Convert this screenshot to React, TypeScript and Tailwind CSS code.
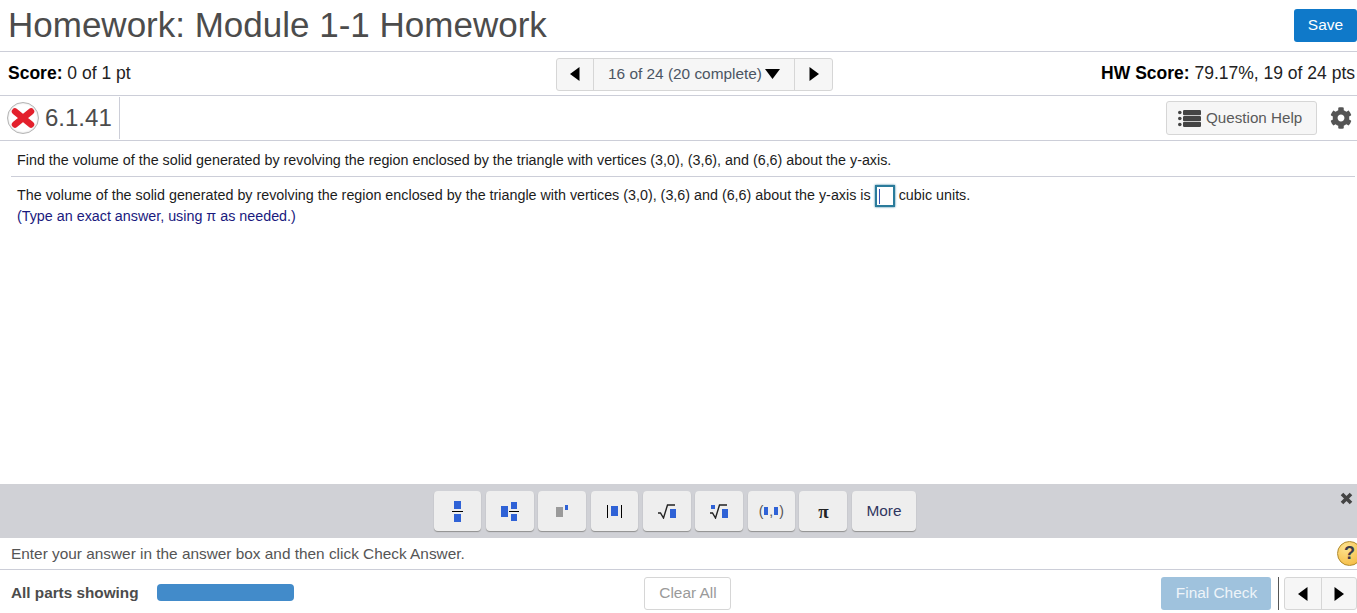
import { FaCog } from "react-icons/fa";
import type { ReactNode } from "react";

const Box = ({ className }: { className: string }) => <span className={`block bg-[#2f62d6] ${className}`} />;

const ArrowLeft = () => (
  <svg width="10" height="14" viewBox="0 0 10 14" className="fill-black">
    <path d="M9.5 0v14L0 7z" />
  </svg>
);

const ArrowRight = () => (
  <svg width="10" height="14" viewBox="0 0 10 14" className="fill-black">
    <path d="M.5 0v14L10 7z" />
  </svg>
);

const ToolButton = ({ width, children }: { width: string; children: ReactNode }) => (
  <button className={`flex h-[40px] shrink-0 items-center justify-center rounded-[4px] bg-[#eeeeee] shadow-[0_1px_1px_#8f8f8f] ${width}`}>
    {children}
  </button>
);

const RootIcon = ({ indexed }: { indexed?: boolean }) => (
  <svg width="18" height="15" viewBox="0 0 18 15">
    <path d="M0 9h2.5l3 5L9.5 1H17" fill="none" stroke="#222" strokeWidth="1.4" />
    <rect x="12" y="5" width="6" height="9" fill="#2f62d6" />
    {indexed && <rect x="1" y="1" width="4" height="4" fill="#2f62d6" />}
  </svg>
);

export default function App() {
  return (
    <div className="flex h-[613px] w-[1357px] flex-col overflow-hidden bg-white font-['Liberation_Sans',Arial,sans-serif] text-[#4a4a4a]">
      <header className="flex h-[52px] shrink-0 items-center justify-between border-b border-[#ccced8] pl-2">
        <h1 className="mb-[2px] text-[35px] leading-none text-[#4c4c4c]">Homework: Module 1-1 Homework</h1>
        <button className="mb-[1px] flex h-[33px] w-[63px] items-center justify-center rounded-[3px] bg-[#0f79c9] text-[15.5px] text-white">Save</button>
      </header>

      <div className="grid h-[44px] shrink-0 grid-cols-[548px_277px_1fr] items-center border-b border-[#ccced8] pl-2 pr-[2px] text-[17.5px] text-[#222]">
        <p><b className="text-black">Score:</b> 0 of 1 pt</p>
        <div className="mt-[1px] flex h-[33px] rounded-[3px] border border-[#d6d6d6] bg-[#f6f6f6]">
          <span className="flex w-[37px] items-center justify-center border-r border-[#d6d6d6]"><ArrowLeft /></span>
          <span className="flex flex-1 items-center justify-center gap-[3px] whitespace-nowrap text-[15.4px] text-[#4b5563]">
            16 of 24 (20 complete)
            <svg width="15" height="10" viewBox="0 0 15 10" className="fill-black"><path d="M0 0h15L7.5 10z" /></svg>
          </span>
          <span className="flex w-[38px] items-center justify-center border-l border-[#d6d6d6]"><ArrowRight /></span>
        </div>
        <p className="justify-self-end whitespace-nowrap"><b className="text-black">HW Score:</b> 79.17%, 19 of 24 pts</p>
      </div>

      <div className="flex h-[45px] shrink-0 items-center justify-between border-b border-[#ccced8]">
        <div className="flex h-[42px] items-center border-r border-[#ccced8] pl-[7px] pr-[7px]">
          <span className="flex h-[32px] w-[32px] items-center justify-center rounded-full border-[1.5px] border-[#b4b4b4] bg-white shadow-[inset_0_0_2px_#ccc]">
            <svg width="24" height="20" viewBox="0 0 24 20" fill="none" stroke="#e3202c" strokeWidth="6.5" strokeLinecap="round">
              <path d="M4 3.5l16 13M20 3.5l-16 13" />
            </svg>
          </span>
          <span className="ml-[6px] text-[24px] text-[#4c4c4c]">6.1.41</span>
        </div>
        <div className="flex items-center pr-[5px]">
          <button className="flex h-[34px] w-[151px] items-center gap-[5px] rounded-[3px] border border-[#d6d6d6] bg-[#f6f6f6] pl-[11px] text-[15.2px] text-[#5a5a5a]">
            <svg width="23" height="17" viewBox="0 0 23 17" className="fill-[#444]">
              <circle cx="1.8" cy="2.5" r="1.8" />
              <circle cx="1.8" cy="8.5" r="1.8" />
              <circle cx="1.8" cy="14.5" r="1.8" />
              <rect x="5" y="0" width="18" height="5.2" rx="1.2" />
              <rect x="5" y="5.9" width="18" height="5.2" rx="1.2" />
              <rect x="5" y="11.8" width="18" height="5.2" rx="1.2" />
            </svg>
            Question Help
          </button>
          <FaCog size={22} className="ml-[13px] text-[#555]" />
        </div>
      </div>

      <main className="min-h-0 flex-1 pl-[11px] pr-[2px] text-[14.32px] text-[#1c1c1c]">
        <p className="flex h-[35px] items-center pl-[6px] pt-[4px]">
          Find the volume of the solid generated by revolving the region enclosed by the triangle with vertices (3,0), (3,6), and (6,6) about the y-axis.
        </p>
        <div className="border-t border-[#ccced8] pl-[6px] pt-[9px]">
          <p className="flex h-[20px] items-center">
            The volume of the solid generated by revolving the region enclosed by the triangle with vertices (3,0), (3,6) and (6,6) about the y-axis is
            <span className="mx-[4px] flex h-[22px] w-[20px] items-center border-2 border-[#2a7b9b] bg-white pl-[2px] shadow-[0_0_2px_#2a7b9b]">
              <span className="h-[15px] w-px bg-[#3552b5]" />
            </span>
            cubic units.
          </p>
          <p className="text-[#1a1a7e]">(Type an exact answer, using π as needed.)</p>
        </div>
      </main>

      <div className="relative flex h-[54px] shrink-0 items-center justify-center gap-[4.625px] bg-[#d0d1d6] pr-[7px]">
        <ToolButton width="w-[47px]">
          <span className="flex flex-col items-center gap-[2px]">
            <Box className="h-[8px] w-[7px]" />
            <span className="h-px w-[11px] bg-black" />
            <Box className="h-[8px] w-[7px]" />
          </span>
        </ToolButton>
        <ToolButton width="w-[48px]">
          <span className="flex items-center gap-[1px]">
            <Box className="h-[11px] w-[7px]" />
            <span className="flex flex-col items-center gap-[2px]">
              <Box className="h-[7px] w-[6px]" />
              <span className="h-px w-[10px] bg-black" />
              <Box className="h-[7px] w-[6px]" />
            </span>
          </span>
        </ToolButton>
        <ToolButton width="w-[48px]">
          <span className="flex items-start gap-[2px]">
            <span className="mt-[2px] h-[10px] w-[7px] bg-[#9a9a9a]" />
            <Box className="h-[5px] w-[3px]" />
          </span>
        </ToolButton>
        <ToolButton width="w-[47px]">
          <span className="flex items-center gap-[3px]">
            <span className="h-[13px] w-px bg-black" />
            <Box className="h-[10px] w-[7px]" />
            <span className="h-[13px] w-px bg-black" />
          </span>
        </ToolButton>
        <ToolButton width="w-[48px]"><RootIcon /></ToolButton>
        <ToolButton width="w-[48px]"><RootIcon indexed /></ToolButton>
        <ToolButton width="w-[47px]">
          <span className="flex items-center gap-[1px] text-[14px] text-[#555]">
            (<Box className="h-[8px] w-[4px]" />,<Box className="h-[8px] w-[4px]" />)
          </span>
        </ToolButton>
        <ToolButton width="w-[48px]">
          <span className="font-['Liberation_Serif',serif] text-[19px] font-bold leading-none text-[#222]">π</span>
        </ToolButton>
        <ToolButton width="w-[64px]"><span className="text-[15.4px] text-[#30365f]">More</span></ToolButton>
        <svg width="13" height="13" viewBox="0 0 13 13" fill="none" stroke="#444" strokeWidth="3.6" className="absolute right-[4px] top-[8px]">
          <path d="M2 2l9 9M11 2l-9 9" />
        </svg>
      </div>

      <div className="relative flex h-[32px] shrink-0 items-center border-b border-[#ccced8] pl-[11px] text-[15.38px] text-[#555]">
        Enter your answer in the answer box and then click Check Answer.
        <span className="absolute right-[-5px] top-[3px] flex h-[25px] w-[25px] items-center justify-center rounded-full border border-[#b08a2c] bg-[radial-gradient(circle_at_35%_25%,#fde38f,#f3b436)] text-[18px] font-bold text-[#3a3a4a]">?</span>
      </div>

      <footer className="flex h-[43px] shrink-0 items-center pl-[11px] pt-[4px]">
        <span className="whitespace-nowrap text-[15.3px] font-bold text-[#4c4c4c]">All parts showing</span>
        <span className="mb-[2px] ml-[19px] h-[17px] w-[137px] shrink-0 rounded-[4px] bg-[#428bca]" />
        <button className="ml-[350px] h-[33px] w-[87px] shrink-0 rounded-[3px] border border-[#d6d6d6] pb-[2px] text-[15.4px] text-[#9a9a9a]">Clear All</button>
        <button className="ml-[430px] h-[33px] w-[110px] shrink-0 rounded-[3px] bg-[#9fc2dd] pb-[2px] text-[15.4px] text-[#eef4f9]">Final Check</button>
        <span className="ml-[7px] h-[33px] w-px shrink-0 bg-[#555]" />
        <div className="ml-[5px] flex h-[33px] w-[73px] shrink-0 rounded-[3px] border border-[#d6d6d6] bg-[#f6f6f6]">
          <span className="flex w-[37px] items-center justify-center border-r border-[#d6d6d6]"><ArrowLeft /></span>
          <span className="flex flex-1 items-center justify-center"><ArrowRight /></span>
        </div>
      </footer>
    </div>
  );
}
